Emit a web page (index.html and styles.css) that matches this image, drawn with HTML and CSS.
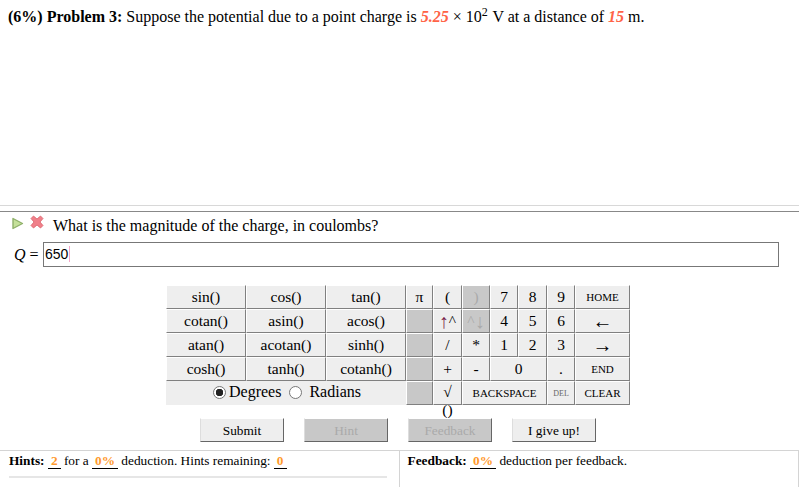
FILE: index.html
```html
<!DOCTYPE html>
<html lang="en">
<head>
    <meta charset="UTF-8">
    <title>Problem 3</title>
    <link rel="stylesheet" href="styles.css">
</head>
<body>
    <div class="problem">
        <b>(6%) Problem 3:</b> Suppose the potential due to a point charge is <i class="given">5.25</i> &times; 10<sup>2</sup> V at a distance of <i class="given">15</i> m.
    </div>

    <hr class="rule-light">
    <hr class="rule-dark">

    <div class="question">
        <svg class="icon-play" width="13" height="13" viewBox="0 0 13 13">
            <path d="M2 1.5 L11.5 6.5 L2 11.5 Z" fill="#c5e09a" stroke="#8fb06a" stroke-width="1.4" stroke-linejoin="round"/>
        </svg>
        <svg class="icon-cross" width="14" height="14" viewBox="0 0 14 14">
            <path d="M3.5 1 L7 4 L10.5 1 L13 3.5 L10 7 L13 10.5 L10.5 13 L7 10 L3.5 13 L1 10.5 L4 7 L1 3.5 Z" fill="#f0808a" stroke="#d9606a" stroke-width="0.8" stroke-linejoin="round"/>
        </svg>
        <span class="question-text">What is the magnitude of the charge, in coulombs?</span>
    </div>

    <div class="answer">
        <span class="answer-label"><i>Q</i> =</span>
        <div class="answer-field"><span class="caret">650</span></div>
    </div>

    <div class="keypad">
        <div class="key">sin()</div>
        <div class="key">cos()</div>
        <div class="key">tan()</div>
        <div class="key">&pi;</div>
        <div class="key">(</div>
        <div class="key off">)</div>
        <div class="key">7</div>
        <div class="key">8</div>
        <div class="key">9</div>
        <div class="key small">HOME</div>

        <div class="key">cotan()</div>
        <div class="key">asin()</div>
        <div class="key">acos()</div>
        <div class="key off"></div>
        <div class="key"><span class="up arrow">&uarr;</span>^</div>
        <div class="key off">^<span class="arrow">&darr;</span></div>
        <div class="key">4</div>
        <div class="key">5</div>
        <div class="key">6</div>
        <div class="key arrow">&larr;</div>

        <div class="key">atan()</div>
        <div class="key">acotan()</div>
        <div class="key">sinh()</div>
        <div class="key off"></div>
        <div class="key">/</div>
        <div class="key">*</div>
        <div class="key">1</div>
        <div class="key">2</div>
        <div class="key">3</div>
        <div class="key arrow">&rarr;</div>

        <div class="key">cosh()</div>
        <div class="key">tanh()</div>
        <div class="key">cotanh()</div>
        <div class="key off"></div>
        <div class="key">+</div>
        <div class="key">-</div>
        <div class="key span-2">0</div>
        <div class="key">.</div>
        <div class="key small">END</div>

        <div class="angle">
            <span class="radio checked"></span>Degrees
            <span class="radio second"></span>Radians
        </div>
        <div class="key off"></div>
        <div class="key sqrt">&radic;<br>()</div>
        <div class="key span-3 small">BACKSPACE</div>
        <div class="key tiny">DEL</div>
        <div class="key small">CLEAR</div>
    </div>

    <div class="actions">
        <div class="button">Submit</div>
        <div class="button disabled">Hint</div>
        <div class="button disabled">Feedback</div>
        <div class="button">I give up!</div>
    </div>

    <div class="footer">
        <div class="panel">
            <b>Hints:</b> <span class="stat">2</span> for a <span class="stat">0%</span> deduction. Hints remaining: <span class="stat">0</span>
            <div class="panel-rule"></div>
        </div>
        <div class="panel">
            <b>Feedback:</b> <span class="stat">0%</span> deduction per feedback.
        </div>
    </div>
</body>
</html>
```

FILE: styles.css
```css
body {
    margin: 0;
    height: 487px;
    overflow: hidden;
    background: #fff;
    color: #000;
    font-family: "Liberation Serif", "Times New Roman", serif;
    font-size: 16px;
}

.problem {
    height: 205px;
    padding: 8px 0 0 8px;
    box-sizing: border-box;
    line-height: 18px;
}

.problem sup {
    font-size: 12px;
    line-height: 0;
    padding-right: 1px;
}

.given {
    color: #ff6347;
    font-weight: bold;
}

hr {
    border: 0;
    margin: 0;
    height: 1px;
}

.rule-light {
    background: #d8d8d8;
    margin-bottom: 5px;
}

.rule-dark {
    background: #888;
}

.question {
    display: flex;
    align-items: center;
    height: 27px;
    padding-left: 11px;
}

.icon-cross {
    margin-left: 6px;
    margin-top: -7px;
}

.icon-play {
    margin-top: -5px;
}

.question-text {
    margin-left: 9px;
}

.answer {
    display: flex;
    align-items: center;
    margin-top: 3px;
    padding-left: 14px;
}

.answer-label {
    width: 29px;
}

.answer-field {
    box-sizing: border-box;
    width: 736px;
    height: 25px;
    border: 1px solid #777;
    padding-left: 1px;
    line-height: 23px;
    font-family: "Liberation Sans", Arial, sans-serif;
    font-size: 14px;
}

.caret {
    display: inline-block;
    line-height: 16px;
    border-right: 1px solid #f4a6c8;
    padding-right: 1px;
}

.keypad {
    display: grid;
    grid-template-columns: 80px 80px 80px 27px 29px 28px 28px 29px 28px 55px;
    grid-auto-rows: 24px;
    width: 464px;
    margin: 18px 0 0 166px;
    font-size: 15.5px;
}

.key {
    box-sizing: border-box;
    display: flex;
    align-items: center;
    justify-content: center;
    background: #eee;
    border: 1px solid;
    border-color: #fff #808080 #808080 #fff;
}

.key.off {
    background: #c8c8c8;
    color: #aaa;
}

.span-2 {
    grid-column: span 2;
}

.span-3 {
    grid-column: span 3;
}

.small {
    font-size: 11px;
}

.tiny {
    font-size: 8px;
    color: #666;
}

.arrow {
    font-size: 20px;
}

.up {
    color: #7a1f4a;
}

.sqrt {
    display: block;
    text-align: center;
    line-height: 18px;
    padding-top: 1px;
}

.angle {
    grid-column: span 3;
    display: flex;
    align-items: center;
    justify-content: center;
    padding: 0 0 2px 2px;
    box-sizing: border-box;
    background: #eee;
    font-size: 16px;
}

.radio {
    box-sizing: border-box;
    width: 13px;
    height: 13px;
    margin-right: 3px;
    border: 1px solid #777;
    border-radius: 50%;
    background: #fff;
}

.radio.second {
    margin-left: 8px;
    margin-right: 7px;
}

.radio.checked {
    background: radial-gradient(circle, #222 0 3.5px, #fff 4px);
}

.actions {
    display: flex;
    gap: 20px;
    margin: 13px 0 0 200px;
}

.button {
    box-sizing: border-box;
    width: 84px;
    height: 24px;
    padding-top: 2px;
    display: flex;
    align-items: center;
    justify-content: center;
    background: #eee;
    border: 1px solid;
    border-color: #fff #666 #666 #ddd;
    font-size: 13.33px;
}

.button.disabled {
    background: #c8c8c8;
    color: #aaa;
}

.footer {
    display: flex;
    margin-top: 8px;
    font-size: 13.33px;
}

.panel {
    box-sizing: border-box;
    width: 399.5px;
    height: 37px;
    padding: 2px 8px 0 9px;
    border-top: 1px solid #d4d4d4;
    border-right: 1px solid #d4d4d4;
}

.panel + .panel {
    padding-left: 8px;
}

.stat {
    display: inline-block;
    padding: 0 3px;
    text-align: center;
    border-bottom: 1px solid #000;
    line-height: 15px;
    color: #ff9a2e;
    font-weight: bold;
}

.panel-rule {
    height: 2px;
    margin: 7px 4px 0 0;
    background: #e6e6e6;
}
```
